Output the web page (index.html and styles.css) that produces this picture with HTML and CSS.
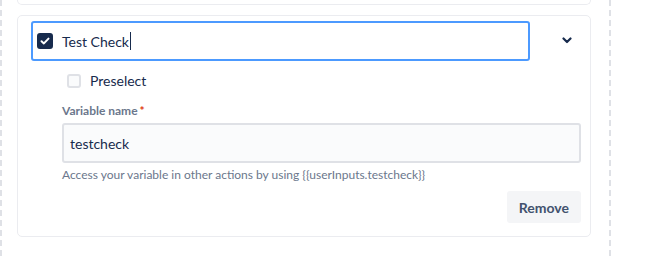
FILE: index.html
```html
<!DOCTYPE html>
<html>
<head>
<meta charset="utf-8">
<link rel="stylesheet" href="styles.css">
</head>
<body>
<div class="column">
  <div class="card card-prev"></div>
  <div class="card">
    <div class="card-head">
      <div class="title-input">
        <span class="check checked">
          <svg width="10" height="8" viewBox="0 0 10 8"><path d="M1.5 4.2 L3.9 6.4 L8.5 1.6" fill="none" stroke="#fff" stroke-width="2" stroke-linecap="round" stroke-linejoin="round"/></svg>
        </span>
        <span class="title-text">Test Check</span><span class="caret"></span>
      </div>
      <button class="toggle">
        <svg width="10" height="7" viewBox="0 0 10 7"><path d="M1.5 1.5 L5 5 L8.5 1.5" fill="none" stroke="#172b4d" stroke-width="2.2" stroke-linecap="round" stroke-linejoin="round"/></svg>
      </button>
    </div>
    <div class="card-body">
      <label class="preselect"><span class="check"></span><span>Preselect</span></label>
      <div class="field">
        <div class="field-label">Variable name<span class="req">*</span></div>
        <div class="text-input">testcheck</div>
        <div class="help">Access your variable in other actions by using {{userInputs.testcheck}}</div>
      </div>
      <div class="actions"><button class="btn">Remove</button></div>
    </div>
  </div>
</div>
</body>
</html>
```
FILE: styles.css
```css
html, body {
  margin: 0;
  padding: 0;
  background: #fff;
  font-family: Lato, "Noto Sans", sans-serif;
  color: #172b4d;
}
.column {
  width: 574px;
  padding: 0 18px 0 15px;
  border-left: 2px dashed #dfe1e6;
  border-right: 2px dashed #dfe1e6;
  height: 256px;
  overflow: hidden;
}
.card {
  border: 1px solid #ebecf0;
  border-radius: 5px;
  background: #fff;
  padding: 5px 13px 13px 13px;
}
.card-prev {
  border-top: none;
  border-radius: 0 0 5px 5px;
  height: 4px;
  padding: 0;
  margin-bottom: 10px;
}
.card-head {
  display: flex;
  align-items: center;
  justify-content: space-between;
}
.title-input {
  flex: none;
  width: 499px;
  height: 40px;
  box-sizing: border-box;
  border: 2px solid #4c9aff;
  border-radius: 3px;
  display: flex;
  align-items: center;
  padding-left: 4px;
}
.check {
  width: 16px;
  height: 16px;
  box-sizing: border-box;
  border-radius: 3px;
  border: 2px solid #dfe1e6;
  background: #fafbfc;
  display: inline-flex;
  align-items: center;
  justify-content: center;
  flex: none;
}
.check.checked {
  background: #172b4d;
  border-color: #172b4d;
}
.title-text {
  margin-left: 9px;
  font-size: 14px;
}
.caret {
  width: 1px;
  height: 18px;
  background: #172b4d;
  margin-left: 1px;
}
.toggle {
  flex: none;
  width: 24px;
  height: 24px;
  border: none;
  background: none;
  padding: 0;
  margin-right: -2px;
  display: flex;
  align-items: center;
  justify-content: center;
  margin-top: -2px;
}
.card-body {
  padding-left: 31px;
  padding-top: 13px;
}
.preselect {
  display: flex;
  align-items: center;
  padding-left: 5px;
  font-size: 14px;
  height: 14px;
  line-height: 14px;
}
.preselect .check {
  width: 14px;
  height: 14px;
  margin-right: 9px;
}
.field {
  margin-top: 15px;
}
.field-label {
  font-size: 12px;
  font-weight: 700;
  color: #6b778c;
  line-height: 16px;
}
.req {
  color: #de350b;
  margin-left: 2px;
}
.text-input {
  margin-top: 4px;
  width: 519px;
  height: 40px;
  box-sizing: border-box;
  border: 2px solid #dfe1e6;
  border-radius: 3px;
  background: #fafbfc;
  font-size: 14px;
  display: flex;
  align-items: center;
  padding-left: 6px;
}
.help {
  margin-top: 4px;
  font-size: 12px;
  color: #6b778c;
  line-height: 16px;
}
.actions {
  display: flex;
  justify-content: flex-end;
  margin-top: 8px;
  width: 519px;
}
.btn {
  font-family: inherit;
  font-size: 14px;
  font-weight: 700;
  color: #42526e;
  background: #f4f5f7;
  border: none;
  border-radius: 3px;
  height: 32px;
  padding: 0 12px;
}
```
